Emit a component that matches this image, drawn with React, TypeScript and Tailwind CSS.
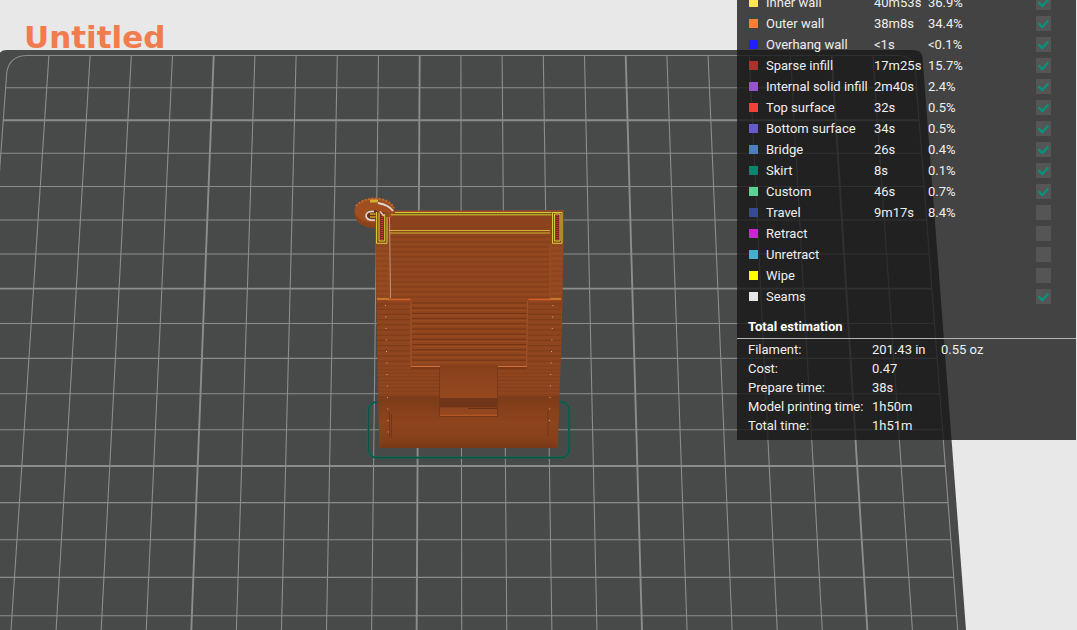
import { useState } from "react";

type Feature = {
  name: string;
  swatch: string;
  time?: string;
  share?: string;
  visible: boolean;
};

const FEATURES: Feature[] = [
  { name: "Inner wall", swatch: "bg-[#ffe64d]", time: "40m53s", share: "36.9%", visible: true },
  { name: "Outer wall", swatch: "bg-[#ff7d38]", time: "38m8s", share: "34.4%", visible: true },
  { name: "Overhang wall", swatch: "bg-[#1f1fff]", time: "<1s", share: "<0.1%", visible: true },
  { name: "Sparse infill", swatch: "bg-[#b03029]", time: "17m25s", share: "15.7%", visible: true },
  { name: "Internal solid infill", swatch: "bg-[#9654cc]", time: "2m40s", share: "2.4%", visible: true },
  { name: "Top surface", swatch: "bg-[#f04040]", time: "32s", share: "0.5%", visible: true },
  { name: "Bottom surface", swatch: "bg-[#665cc7]", time: "34s", share: "0.5%", visible: true },
  { name: "Bridge", swatch: "bg-[#4d80ba]", time: "26s", share: "0.4%", visible: true },
  { name: "Skirt", swatch: "bg-[#00876e]", time: "8s", share: "0.1%", visible: true },
  { name: "Custom", swatch: "bg-[#5ed194]", time: "46s", share: "0.7%", visible: true },
  { name: "Travel", swatch: "bg-[#38489b]", time: "9m17s", share: "8.4%", visible: false },
  { name: "Retract", swatch: "bg-[#cd22d6]", visible: false },
  { name: "Unretract", swatch: "bg-[#49adcf]", visible: false },
  { name: "Wipe", swatch: "bg-[#ffff00]", visible: false },
  { name: "Seams", swatch: "bg-[#e6e6e6]", visible: true },
];

const TOTALS = [
  { label: "Filament:", value: "201.43 in", extra: "0.55 oz" },
  { label: "Cost:", value: "0.47" },
  { label: "Prepare time:", value: "38s" },
  { label: "Model printing time:", value: "1h50m" },
  { label: "Total time:", value: "1h51m" },
];

const ROW_LINES = [
  87.8, 120.2, 153.3, 186.5, 220, 254, 288.6, 323.5, 358.4, 393.8, 429.8, 466, 502.6, 539.7, 577.4, 615.8,
];

const leftEdge = (y: number) => 7.7 - ((y - 55.5) / 574.5) * 41.7;
const rightEdge = (y: number) => 914.1 + ((y - 55.5) / 574.5) * 43.6;

function BuildPlate() {
  const columns = Array.from({ length: 21 }, (_, i) => i - 4);
  return (
    <g>
      <path d="M-40 630 L-2 57 Q-1 50 7 50 H913 Q921.500 50 922.500 57 L966 630 Z" fill="#484a49" />
      <g stroke="#8b8d8c" fill="none">
        <path d="M-34 630 L6.800 72 Q10 55.500 27 55.500 H898 Q913 55.500 915.300 70 L957.700 630" strokeWidth="1.100" />
        {columns.map((k) => (
          <line
            key={k}
            x1={213.7 + 41.2 * k}
            y1={55.5}
            x2={191.3 + 45.07 * k}
            y2={630}
            strokeWidth={k % 5 === 0 ? 1.9 : 1.1}
          />
        ))}
        {ROW_LINES.map((y, i) => (
          <line key={y} x1={leftEdge(y)} y1={y} x2={rightEdge(y)} y2={y} strokeWidth={i % 5 === 1 ? 1.9 : 1.1} />
        ))}
      </g>
    </g>
  );
}

function PrintedPart() {
  const upper = Array.from({ length: 13 }, (_, i) => 237 + i * 5);
  const middle = Array.from({ length: 12 }, (_, i) => 303 + i * 5.2);
  const lower = Array.from({ length: 9 }, (_, i) => 366 + i * 3.6);
  return (
    <g>
      <defs>
        <linearGradient id="base" x1="0" x2="0" y1="0" y2="1">
          <stop offset="0" stopColor="#7c3b19" />
          <stop offset="0.5" stopColor="#8e441c" />
          <stop offset="0.8" stopColor="#87411b" />
          <stop offset="1" stopColor="#783917" />
        </linearGradient>
        <linearGradient id="tab" x1="0" x2="0" y1="0" y2="1">
          <stop offset="0" stopColor="#87401b" />
          <stop offset="1" stopColor="#96491f" />
        </linearGradient>
      </defs>

      <rect x="368.500" y="402" width="200.500" height="55.700" rx="8" fill="none" stroke="#0f6b56" strokeWidth="2.200" />
      <rect x="368.500" y="402" width="200.500" height="55.700" rx="8" fill="none" stroke="#0a3f34" strokeWidth="0.600" />

      <path d="M375.500 211 L564 210.500 L562.500 300 L561.500 340 L557.500 448 H379.500 L377 340 L375.500 240 Z" fill="#8f451d" />
      <path d="M389 215 H552 V230 H389 Z" fill="#8c431d" />
      <path d="M376 244 H388.500 V299 H376.500 Z M550.500 244 H563 L562 299 H550.500 Z" fill="#964a1f" />

      <g strokeWidth="1">
        {upper.map((y) => (
          <g key={y}>
            <line x1="390" x2="550" y1={y} y2={y} stroke="#79391a" strokeOpacity="0.600" />
            <line x1="390" x2="550" y1={y + 2} y2={y + 2} stroke="#9a4c22" strokeOpacity="0.700" />
            <line x1="376" x2="388" y1={y + 9} y2={y + 9} stroke="#7c3a18" strokeOpacity="0.500" />
            <line x1="551" x2="562" y1={y + 9} y2={y + 9} stroke="#7c3a18" strokeOpacity="0.500" />
          </g>
        ))}
        {middle.map((y) => (
          <g key={y}>
            <line x1="412" x2="527" y1={y} y2={y} stroke="#733417" />
            <line x1="412" x2="527" y1={y + 2} y2={y + 2} stroke="#9e4e22" strokeOpacity="0.800" />
            <line x1="377" x2="410" y1={y + 1} y2={y + 1} stroke="#74371a" strokeOpacity="0.700" />
            <line x1="528" x2="561" y1={y + 1} y2={y + 1} stroke="#74371a" strokeOpacity="0.700" />
          </g>
        ))}
        {lower.map((y) => (
          <line key={y} x1="378" x2="559.500" y1={y} y2={y} stroke="#783818" strokeOpacity="0.400" />
        ))}
      </g>

      <path d="M378.300 396 H559.500 L557.500 448 H379.500 Z" fill="url(#base)" />

      <rect x="440" y="364.500" width="58" height="34" fill="url(#tab)" />
      <rect x="440" y="398" width="57" height="9.500" fill="#71351a" />
      <rect x="440" y="407.500" width="57" height="7" fill="#92471e" />
      <path d="M468 408.500 H497" stroke="#6a2f14" strokeWidth="1" />
      <path d="M439.500 367 V416.500 H497.500 V367" fill="none" stroke="#6e3217" strokeWidth="0.700" />
      <path d="M440 415.200 H497" stroke="#c8602c" strokeWidth="1" />

      <path d="M411 301 V366 M527.500 301 L526.500 366" stroke="#a7552a" strokeWidth="0.800" />
      <path d="M411 366.500 H440 M498 366.500 H527" stroke="#d3713a" strokeWidth="1.100" />
      <path d="M411 368 H440 M498 368 H527" stroke="#6b2d13" strokeWidth="1" />
      <path d="M377 299.500 H410.500 M528.500 299.500 H561" stroke="#d3602c" strokeWidth="1.300" />
      <path d="M377 298.800 H389 M550 298.800 H561" stroke="#c8922c" strokeWidth="1" />
      <path d="M389.500 412 V438 M391.500 414 V438 M548 410 V436" stroke="#6c3115" strokeWidth="0.700" />
      <path d="M550 245 V298" stroke="#a65327" strokeWidth="0.700" />

      <g stroke="#e0a987" strokeWidth="1" strokeDasharray="1 10.500">
        <path d="M385.500 305 L388.500 440" />
        <path d="M553 305 L549 430" />
      </g>

      <ellipse cx="374.500" cy="214" rx="20" ry="14" fill="#8b4219" />
      <ellipse cx="374.500" cy="210.500" rx="20" ry="12.500" fill="#a04e1f" />
      <path d="M356 206 Q363 198.500 375 198.500 Q389 199 394 208" fill="none" stroke="#c5682f" strokeWidth="2" strokeDasharray="2 1.500" />
      <path d="M370 201 H378" stroke="#d0b130" strokeWidth="3" />
      <path d="M378 203 Q389 205 393 211" fill="none" stroke="#ded6d2" strokeWidth="1.800" />
      <ellipse cx="373" cy="215" rx="7" ry="5" fill="#6b331a" />
      <path d="M374 211.500 Q366 211 366 216 Q367 221 375 220" fill="none" stroke="#ddd8d4" strokeWidth="1.700" />
      <path d="M370 214 H376 M370 217 H376" stroke="#c9a22d" strokeWidth="1.400" />

      <path d="M395 211 H564" stroke="#a3502a" strokeWidth="1" />
      <path d="M395 213.500 H552" stroke="#74501c" strokeWidth="3" />
      <path d="M395 212.500 H556 M391 214.800 H554" stroke="#d6cb33" strokeWidth="1" />
      <path d="M389 230.500 H550 M389 233 H550" stroke="#cdb32f" strokeWidth="1" />

      <path d="M375.500 212 H388 V244 H375.500 Z M551.500 212 H563.500 V244 H551.500 Z" fill="#8a481f" />
      <g fill="none" stroke="#d3cb36">
        <path d="M376.500 212 V243.300 H387 V217 M379 213 V241 H384.700 V214" />
        <path d="M552.500 212.500 V243.300 H562 V212.500 Z M554.500 214 V241 H560 V214 Z" />
      </g>
      <path d="M382 212.500 V240 M557.300 215 V240" stroke="#7d2423" strokeWidth="3.600" />
      <path d="M382 213 V240 M557.300 215 V240" stroke="#cf4036" strokeWidth="1.800" strokeDasharray="1 1" />
      <path d="M380 211.500 L384 216" stroke="#d9cfc8" strokeWidth="1.600" />
      <path d="M389.500 217 L390.500 298" stroke="#c3a090" strokeWidth="0.900" />
    </g>
  );
}

function VisibilityBox({ id, label, initial }: { id: string; label: string; initial: boolean }) {
  const [checked, setChecked] = useState(initial);
  return (
    <span className="relative block size-[15px]">
      <input
        id={id}
        type="checkbox"
        aria-label={label}
        checked={checked}
        onChange={() => setChecked(!checked)}
        className="block size-[15px] appearance-none bg-[#555555]"
      />
      {checked && (
        <svg viewBox="0 0 15 15" className="pointer-events-none absolute inset-0 size-[15px]" aria-hidden="true">
          <path d="M2.500 7.300 L6.300 11 L12.300 4.500" fill="none" stroke="#08917d" strokeWidth="2.400" />
        </svg>
      )}
    </span>
  );
}

function Legend() {
  return (
    <aside className="-mt-2 mr-px w-[339px] shrink-0 bg-[#171717]/79 pb-[5px] text-[13px] text-[#efefef]">
      <table className="w-full table-fixed border-collapse leading-5">
        <colgroup>
          <col className="w-[29px]" />
          <col className="w-[108px]" />
          <col className="w-[54px]" />
          <col />
          <col className="w-[40px]" />
        </colgroup>
        <tbody>
          {FEATURES.map((f) => {
            const id = "show-" + f.name.toLowerCase().replace(/ /g, "-");
            return (
              <tr key={f.name} className="h-[21px] whitespace-nowrap">
                <td className="p-0 pl-3">
                  <span className={"block size-[9px] " + f.swatch} />
                </td>
                <td className="p-0">
                  <label htmlFor={id}>{f.name}</label>
                </td>
                <td className="p-0">{f.time}</td>
                <td className="p-0">{f.share}</td>
                <td className="p-0">
                  <VisibilityBox id={id} label={f.name} initial={f.visible} />
                </td>
              </tr>
            );
          })}
        </tbody>
      </table>

      <h2 className="mt-2 border-b border-[#b5b5b5] pl-[11px] text-[13px] leading-[23px] font-bold text-white">
        Total estimation
      </h2>

      <table className="mt-px w-full table-fixed border-collapse leading-[19px]">
        <colgroup>
          <col className="w-[135px]" />
          <col className="w-[69px]" />
          <col />
        </colgroup>
        <tbody>
          {TOTALS.map((t) => (
            <tr key={t.label} className="h-[19px] whitespace-nowrap">
              <th scope="row" className="p-0 pl-[11px] text-left font-normal">
                {t.label}
              </th>
              <td className="p-0">{t.value}</td>
              <td className="p-0">{t.extra}</td>
            </tr>
          ))}
        </tbody>
      </table>
    </aside>
  );
}

export default function App() {
  return (
    <main className="relative min-h-screen overflow-hidden bg-[#e8e8e8] font-['Roboto',sans-serif]">
      <svg
        viewBox="0 0 1077 630"
        preserveAspectRatio="xMinYMin slice"
        className="absolute inset-0 h-full w-full"
        role="img"
        aria-label="Sliced model on build plate"
      >
        <BuildPlate />
        <PrintedPart />
      </svg>
      <div className="relative flex items-start justify-between">
        <h1 className="pt-5 pl-6 font-['DejaVu_Sans',sans-serif] text-[31px] leading-[34px] font-bold text-[#f07c50]">
          Untitled
        </h1>
        <Legend />
      </div>
    </main>
  );
}
